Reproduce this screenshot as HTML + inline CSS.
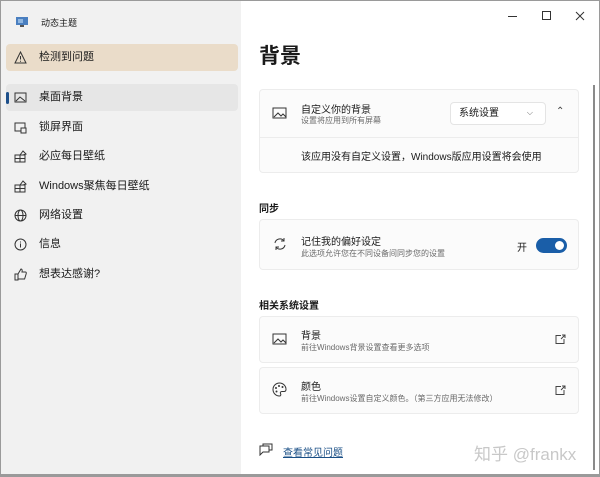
<!DOCTYPE html>
<html><head><meta charset="utf-8"><style>
*{margin:0;padding:0;box-sizing:border-box}
body{width:600px;height:477px;overflow:hidden;background:#fff;font-family:"Liberation Sans","Noto Sans CJK SC",sans-serif;color:#1a1a1a;position:relative}
.frame{position:absolute;left:0;top:0;width:600px;height:477px;border:1px solid #9a9a9a;border-bottom:3px solid #9a9a9a}
.side{position:absolute;left:1px;top:1px;width:240px;height:473px;background:#f1f1f1}
.sb{position:absolute;left:593px;top:85px;width:2px;height:385px;background:#8a8a8a}
.t{position:absolute;white-space:nowrap}
.it{position:absolute;left:5px;width:232px;height:27px;font-size:11px;line-height:27px;padding-left:33px;border-radius:4px}
.ic{position:absolute;left:8px;top:7px;width:13px;height:13px}
.card{position:absolute;left:259px;width:320px;background:#fbfbfb;border:1px solid #ececec;border-radius:4px}
.h{font-size:10px;color:#1a1a1a}
.s{font-size:8px;color:#6a6a6a}
.sec{font-size:10px;font-weight:bold}
</style></head><body>
<div class="side">
 <svg style="position:absolute;left:14px;top:15px" width="14" height="12"><rect x="1" y="1" width="12" height="8" fill="#4a7fc0"/><rect x="5" y="9" width="4" height="2" fill="#555"/><rect x="3" y="3" width="5" height="4" fill="#8fb6e0"/></svg>
 <div class="t" style="left:40px;top:15px;font-size:9px">动态主题</div>
 <div class="it" style="top:43px;background:#eadcc9">
  <svg class="ic" viewBox="0 0 13 13"><path d="M6.5 1L12 12H1Z" fill="none" stroke="#333" stroke-width="1"/><path d="M6.5 5v3.5M6.5 9.8v1" stroke="#333"/></svg>检测到问题</div>
 <div class="it" style="top:83px;background:#e6e6e6"><div style="position:absolute;left:0;top:8px;width:3px;height:12px;background:#1d4f8a;border-radius:2px"></div>
  <svg class="ic" viewBox="0 0 13 13"><rect x="1" y="2" width="11" height="9" fill="none" stroke="#333"/><path d="M2 10l4-4 5 4" fill="none" stroke="#333"/></svg>桌面背景</div>
 <div class="it" style="top:113px"><svg class="ic" viewBox="0 0 13 13"><rect x="1" y="2" width="10" height="8" fill="none" stroke="#333"/><rect x="7" y="7" width="5" height="5" fill="#f1f1f1" stroke="#333"/></svg>锁屏界面</div>
 <div class="it" style="top:142px"><svg class="ic" viewBox="0 0 13 13"><path d="M1 5h10v7H1zM6 5v7M1 8.5h10M6 5l3-4 3 3-3 1" fill="none" stroke="#333"/></svg>必应每日壁纸</div>
 <div class="it" style="top:172px"><svg class="ic" viewBox="0 0 13 13"><path d="M1 5h10v7H1zM6 5v7M1 8.5h10M6 5l3-4 3 3-3 1" fill="none" stroke="#333"/></svg>Windows聚焦每日壁纸</div>
 <div class="it" style="top:201px"><svg class="ic" viewBox="0 0 13 13"><circle cx="6.5" cy="6.5" r="5.5" fill="none" stroke="#333"/><ellipse cx="6.5" cy="6.5" rx="2.5" ry="5.5" fill="none" stroke="#333"/><path d="M1 6.5h11" stroke="#333"/></svg>网络设置</div>
 <div class="it" style="top:230px"><svg class="ic" viewBox="0 0 13 13"><circle cx="6.5" cy="6.5" r="5.5" fill="none" stroke="#333"/><path d="M6.5 5.5v4M6.5 3.5v1" stroke="#333"/></svg>信息</div>
 <div class="it" style="top:260px"><svg class="ic" viewBox="0 0 13 13"><path d="M1 6h3v6H1zM4 6l3-5c1 0 1.5 1 1 3h3.5c.8 0 1 1 .6 2l-1.5 5H4" fill="none" stroke="#333"/></svg>想表达感谢?</div>
</div>
<div style="position:absolute;left:508px;top:16px;width:9px;height:1px;background:#333"></div>
<div style="position:absolute;left:542px;top:11px;width:9px;height:9px;border:1px solid #333"></div>
<svg style="position:absolute;left:575px;top:11px" width="10" height="10"><path d="M1 1l8 8M9 1l-8 8" stroke="#333" stroke-width="1"/></svg>
<div class="t" style="left:259px;top:40px;font-size:21px;font-weight:bold">背景</div>
<div class="card" style="top:89px;height:84px">
 <svg style="position:absolute;left:12px;top:17px" width="15" height="13" viewBox="0 0 15 13"><rect x="1" y="1" width="13" height="10" fill="none" stroke="#333"/><path d="M2 10l4-4 3 3 2-2 3 3" fill="none" stroke="#333"/></svg>
 <div class="t h" style="left:41px;top:11px">自定义你的背景</div>
 <div class="t s" style="left:41px;top:25px">设置将应用到所有屏幕</div>
 <div style="position:absolute;left:190px;top:12px;width:96px;height:23px;background:#fff;border:1px solid #e4e4e4;border-radius:4px;font-size:10px;line-height:21px;padding-left:8px">系统设置<span style="position:absolute;right:12px;top:-1px;font-size:8px;color:#666">⌵</span></div>
 <div class="t" style="left:296px;top:16px;font-size:10px;color:#444">⌃</div>
 <div style="position:absolute;left:0;top:47px;width:318px;height:1px;background:#ececec"></div>
 <div class="t" style="left:41px;top:58px;font-size:10px">该应用没有自定义设置，Windows版应用设置将会使用</div>
</div>
<div class="t sec" style="left:259px;top:200px">同步</div>
<div class="card" style="top:219px;height:51px">
 <svg style="position:absolute;left:13px;top:17px" width="14" height="14" viewBox="0 0 14 14"><path d="M2 6a5 5 0 0 1 9-2M12 8a5 5 0 0 1-9 2M11 1v3H8M3 13v-3h3" fill="none" stroke="#333"/></svg>
 <div class="t h" style="left:41px;top:13px">记住我的偏好设定</div>
 <div class="t s" style="left:41px;top:28px">此选项允许您在不同设备间同步您的设置</div>
 <div class="t" style="left:257px;top:19px;font-size:10px">开</div>
 <div style="position:absolute;left:276px;top:18px;width:31px;height:15px;background:#1a5ea8;border-radius:8px"><div style="position:absolute;right:3px;top:3px;width:9px;height:9px;background:#fff;border-radius:50%"></div></div>
</div>
<div class="t sec" style="left:259px;top:297px">相关系统设置</div>
<div class="card" style="top:316px;height:47px">
 <svg style="position:absolute;left:12px;top:16px" width="15" height="13" viewBox="0 0 15 13"><rect x="1" y="1" width="13" height="10" fill="none" stroke="#333"/><path d="M2 10l4-4 3 3 2-2 3 3" fill="none" stroke="#333"/></svg>
 <div class="t h" style="left:41px;top:10px">背景</div>
 <div class="t s" style="left:41px;top:25px">前往Windows背景设置查看更多选项</div>
 <svg style="position:absolute;left:295px;top:17px" width="11" height="10"><path d="M6 1.5H1v8h8V5M7 1h3v3M10 1L6 5" fill="none" stroke="#444"/></svg>
</div>
<div class="card" style="top:367px;height:47px">
 <svg style="position:absolute;left:12px;top:14px" width="15" height="15" viewBox="0 0 15 15"><path d="M7.5 1a6.5 6.5 0 1 0 0 13c1.5 0 1.5-1.5 1-2.5s0-2 1.5-2h2c1.5 0 2-1 2-2A6.5 6.5 0 0 0 7.5 1z" fill="none" stroke="#333"/><circle cx="4" cy="6" r="1" fill="#333"/><circle cx="7" cy="4" r="1" fill="#333"/><circle cx="10.5" cy="5" r="1" fill="#333"/><circle cx="4.5" cy="9.5" r="1" fill="#333"/></svg>
 <div class="t h" style="left:41px;top:10px">颜色</div>
 <div class="t s" style="left:41px;top:25px">前往Windows设置自定义颜色。（第三方应用无法修改）</div>
 <svg style="position:absolute;left:295px;top:17px" width="11" height="10"><path d="M6 1.5H1v8h8V5M7 1h3v3M10 1L6 5" fill="none" stroke="#444"/></svg>
</div>
<svg style="position:absolute;left:259px;top:443px" width="14" height="13" viewBox="0 0 14 13"><path d="M1 3h9v6H4l-3 3zM4 3V1h9v6h-3" fill="none" stroke="#333"/></svg>
<div class="t" style="left:283px;top:444px;font-size:10px;color:#1a4f86;text-decoration:underline">查看常见问题</div>
<div class="t" style="left:474px;top:440px;font-size:17px;color:#c8c8c8">知乎 @frankx</div>
<div class="sb"></div>
<div class="frame"></div>
</body></html>
